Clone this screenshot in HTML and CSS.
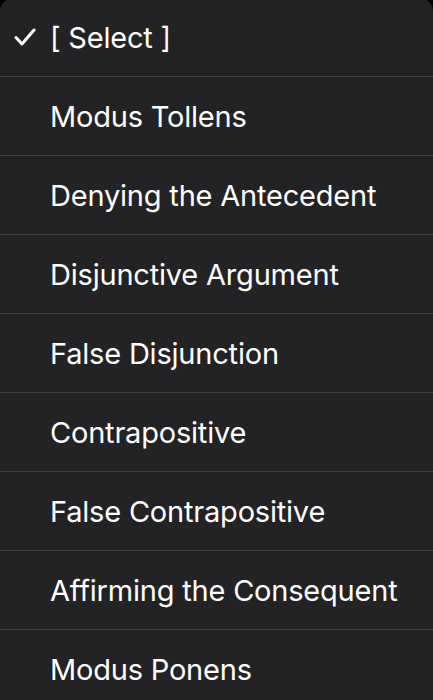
FILE: index.html
```html
<!DOCTYPE html>
<html lang="en">
<head>
    <meta charset="UTF-8" />
    <meta name="viewport" content="width=device-width, initial-scale=1.0"/>
    <title>Select</title>
    <link rel="stylesheet" href="styles.css">
</head>
<body>
    <ul class="menu">
        <li class="item selected">
            <span class="check">
                <svg width="22" height="18" viewBox="0 0 22 18"><path d="M2 9.5 L8 16 L20 2" fill="none" stroke="#fff" stroke-width="3" stroke-linecap="round" stroke-linejoin="round"/></svg>
            </span>
            <span class="label">[ Select ]</span>
        </li>
        <li class="item"><span class="check"></span><span class="label">Modus Tollens</span></li>
        <li class="item"><span class="check"></span><span class="label">Denying the Antecedent</span></li>
        <li class="item"><span class="check"></span><span class="label">Disjunctive Argument</span></li>
        <li class="item"><span class="check"></span><span class="label">False Disjunction</span></li>
        <li class="item"><span class="check"></span><span class="label">Contrapositive</span></li>
        <li class="item"><span class="check"></span><span class="label">False Contrapositive</span></li>
        <li class="item"><span class="check"></span><span class="label">Affirming the Consequent</span></li>
        <li class="item"><span class="check"></span><span class="label">Modus Ponens</span></li>
    </ul>
</body>
</html>
```

FILE: styles.css
```css
html, body {
    margin: 0;
    padding: 0;
    background-color: #000;
    height: 100%;
    overflow: hidden;
}
.menu {
    list-style: none;
    margin: -2px 0 0 0;
    padding: 0;
    width: 433px;
    background-color: #232325;
    border-radius: 14px 14px 0 0;
    font-family: Inter, "Noto Sans", sans-serif;
    color: #fff;
}
.item {
    display: flex;
    align-items: center;
    height: 78px;
    border-bottom: 1px solid #3e3e40;
}
.check {
    width: 51px;
    display: flex;
    justify-content: center;
    padding-right: 1px;
    box-sizing: border-box;
}
.label {
    font-size: 29px;
    letter-spacing: -0.2px;
    margin-left: -1px;
}
```
